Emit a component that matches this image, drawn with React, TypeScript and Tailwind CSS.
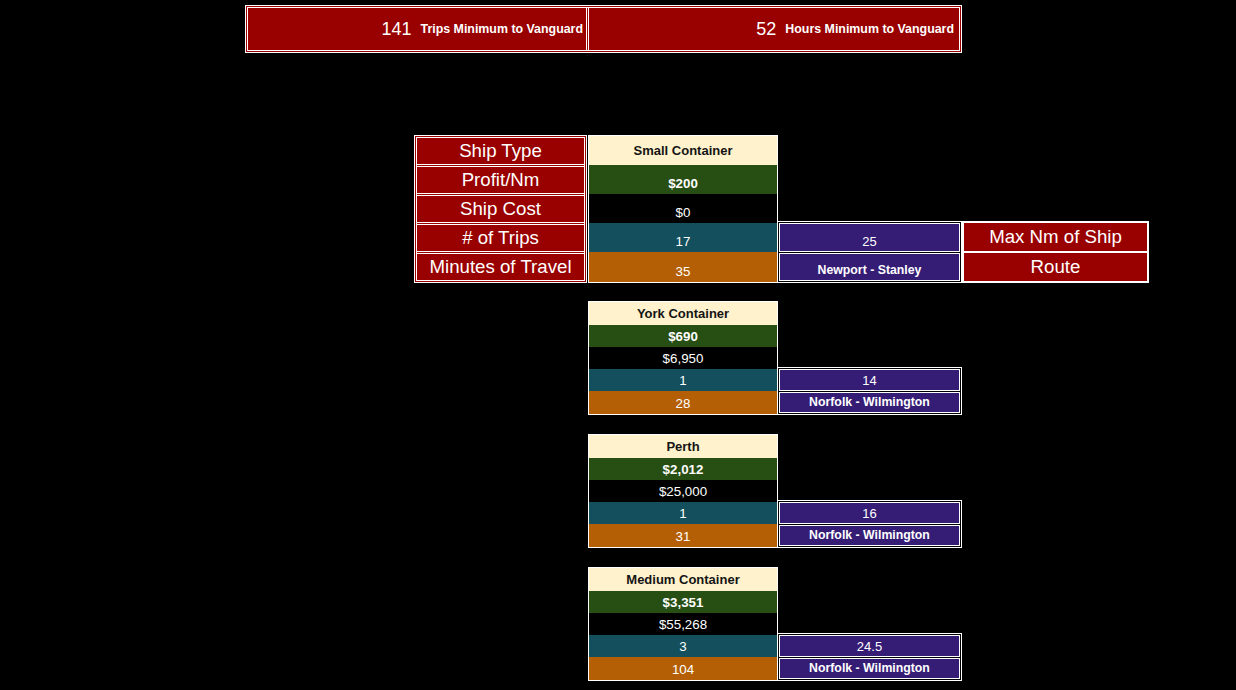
type Ship = {
  name: string
  profit: string
  cost: string
  trips: string
  minutes: string
  maxNm: string
  route: string
}

const ships: Ship[] = [
  { name: 'Small Container', profit: '$200', cost: '$0', trips: '17', minutes: '35', maxNm: '25', route: 'Newport - Stanley' },
  { name: 'York Container', profit: '$690', cost: '$6,950', trips: '1', minutes: '28', maxNm: '14', route: 'Norfolk - Wilmington' },
  { name: 'Perth', profit: '$2,012', cost: '$25,000', trips: '1', minutes: '31', maxNm: '16', route: 'Norfolk - Wilmington' },
  { name: 'Medium Container', profit: '$3,351', cost: '$55,268', trips: '3', minutes: '104', maxNm: '24.5', route: 'Norfolk - Wilmington' },
]

const labels = ['Ship Type', 'Profit/Nm', 'Ship Cost', '# of Trips', 'Minutes of Travel']

const LabelColumn = () => (
  <div className="flex h-[148px] w-[173px] flex-col border-[3px] border-double border-white bg-[#990000]">
    {labels.map((l, i) => (
      <div
        key={l}
        className={`flex flex-1 items-center justify-center text-[18.67px] leading-none ${i < 4 ? 'border-b-[3px] border-double border-white' : ''}`}
      >
        {l}
      </div>
    ))}
  </div>
)

const ValueColumn = ({ ship, big }: { ship: Ship; big: boolean }) => (
  <div className={`ml-px flex w-[190px] flex-col border border-white text-center ${big ? 'h-[148px]' : 'h-[114px]'}`}>
    <div className={`flex items-center justify-center bg-[#fff2cc] text-[13px] font-bold text-[#141414] ${big ? 'h-[29px]' : 'h-[23px]'}`}>
      {ship.name}
    </div>
    <div className={`flex items-end justify-center bg-[#274e13] pb-[3px] text-[13.33px] font-bold leading-[15px] ${big ? 'h-[29px]' : 'h-[22px]'}`}>
      {ship.profit}
    </div>
    <div className={`flex items-end justify-center bg-black pb-[3px] text-[13.33px] leading-[15px] ${big ? 'h-[29px]' : 'h-[22px]'}`}>
      {ship.cost}
    </div>
    <div className={`flex items-end justify-center bg-[#134f5c] pb-[3px] text-[13.33px] leading-[15px] ${big ? 'h-[29px]' : 'h-[22px]'}`}>
      {ship.trips}
    </div>
    <div className={`flex items-end justify-center bg-[#b45f06] pb-[3px] text-[13.33px] leading-[15px] ${big ? 'h-[30px]' : 'h-[23px]'}`}>
      {ship.minutes}
    </div>
  </div>
)

const PurpleColumn = ({ ship, big }: { ship: Ship; big: boolean }) => (
  <div className={`flex w-[184px] flex-col gap-px border-y border-r border-white bg-black p-px ${big ? 'h-[62px]' : 'h-[48px]'}`}>
    <div className="flex flex-1 items-end justify-center border border-white bg-[#351c75] pb-[2px] text-[13px] leading-[15px]">
      {ship.maxNm}
    </div>
    <div className="flex flex-1 items-end justify-center border border-white bg-[#351c75] pb-[2px] text-[12.3px] font-bold leading-[15px]">
      {ship.route}
    </div>
  </div>
)

const RedColumn = () => (
  <div className="flex h-[62px] w-[187px] flex-col border-2 border-white bg-[#990000] text-[18.67px] leading-none">
    <div className="flex flex-1 items-center justify-center border-b-2 border-white">Max Nm of Ship</div>
    <div className="flex flex-1 items-center justify-center">Route</div>
  </div>
)

const App = () => {
  const [main, ...rest] = ships
  return (
    <div className="min-h-[690px] w-full bg-black font-['Liberation_Sans',Arial,sans-serif] text-white">
      <div className="pl-[245px] pt-[5px]">
        {/* vanguard targets */}
        <div className="flex h-[48px] w-[717px] border-[3px] border-double border-white bg-[#990000]">
          <div className="flex w-[341px] items-center justify-end gap-[9px] border-r-[3px] border-double border-white pr-[3px]">
            <span className="text-[18px] leading-none">141</span>
            <span className="text-[12.4px] font-bold leading-none">Trips Minimum to Vanguard</span>
          </div>
          <div className="flex flex-1 items-center justify-end gap-[9px] pr-[5px]">
            <span className="text-[18px] leading-none">52</span>
            <span className="text-[12.4px] font-bold leading-none">Hours Minimum to Vanguard</span>
          </div>
        </div>
      </div>

      <div className="mt-[82px] flex flex-col pl-[414px]">
        <div className="flex items-end">
          <LabelColumn />
          <ValueColumn ship={main} big={true} />
          <PurpleColumn ship={main} big={true} />
          <RedColumn />
        </div>
        {rest.map((s, i) => (
          <div key={s.name} className={`flex items-end ${i == 0 ? 'mt-[18px]' : 'mt-[19px]'}`}>
            <div className="w-[173px]" />
            <ValueColumn ship={s} big={false} />
            <PurpleColumn ship={s} big={false} />
          </div>
        ))}
      </div>
    </div>
  )
}

export default App
